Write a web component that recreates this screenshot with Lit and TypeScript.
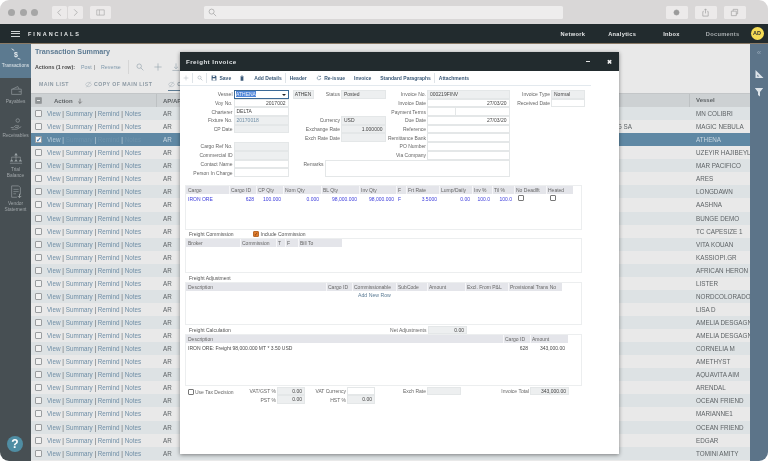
import { LitElement, css, html, svg } from "lit";
import { customElement } from "lit/decorators.js";

const VESSELS = [
  "MN COLIBRI", "MAGIC NEBULA", "ATHENA", "UZEYIR HAJIBEYLI", "MAR PACIFICO", "ARES", "LONGDAWN",
  "AASHNA", "BUNGE DEMO", "TC CAPESIZE 1", "VITA KOUAN", "KASSIOPI.GR", "AFRICAN HERON", "LISTER",
  "NORDCOLORADO", "LISA D", "AMELIA DESGAGNES", "AMELIA DESGAGNES", "CORNELIA M", "AMETHYST",
  "AQUAVITA AIM", "ARENDAL", "OCEAN FRIEND", "MARIANNE1", "OCEAN FRIEND", "EDGAR", "TOMINI AMITY",
];

type Cell = { t?: string; k: "l" | "f" | "g"; c: string; r: string; right?: boolean; cls?: string };

// grid lines: 1 label, 2 field, 3 gap, 4 athen, 5-6 remarks label, 7 field, 8 label, 9 field, 10 label, 11 field
const FORM: Cell[] = [
  { t: "Vessel", k: "l", c: "1/2", r: "1" },
  { t: "Voy No.", k: "l", c: "1/2", r: "2" },
  { t: "2017002", k: "f", c: "2/3", r: "2", right: true },
  { t: "Charterer", k: "l", c: "1/2", r: "3" },
  { t: "DELTA", k: "f", c: "2/3", r: "3" },
  { t: "Fixture No.", k: "l", c: "1/2", r: "4" },
  { t: "20170018", k: "g", c: "2/3", r: "4", cls: "blue" },
  { t: "CP Date", k: "l", c: "1/2", r: "5" },
  { k: "g", c: "2/3", r: "5" },
  { t: "Cargo Ref No.", k: "l", c: "1/2", r: "7" },
  { k: "g", c: "2/3", r: "7" },
  { t: "Commercial ID", k: "l", c: "1/2", r: "8" },
  { k: "g", c: "2/3", r: "8" },
  { t: "Contact Name", k: "l", c: "1/2", r: "9" },
  { k: "f", c: "2/3", r: "9" },
  { t: "Person In Charge", k: "l", c: "1/2", r: "10" },
  { k: "f", c: "2/3", r: "10" },
  { t: "ATHEN", k: "g", c: "4/5", r: "1", cls: "center" },
  { t: "Status", k: "l", c: "5/7", r: "1" },
  { t: "Posted", k: "g", c: "7/8", r: "1" },
  { t: "Currency", k: "l", c: "4/7", r: "4" },
  { t: "USD", k: "g", c: "7/8", r: "4" },
  { t: "Exchange Rate", k: "l", c: "4/7", r: "5" },
  { t: "1.000000", k: "g", c: "7/8", r: "5", right: true },
  { t: "Exch Rate Date", k: "l", c: "4/7", r: "6" },
  { k: "g", c: "7/8", r: "6" },
  { t: "Remarks", k: "l", c: "4/6", r: "9" },
  { k: "f", c: "6/10", r: "9/11" },
  { t: "Invoice No.", k: "l", c: "8/9", r: "1" },
  { t: "000219FINV", k: "g", c: "9/10", r: "1" },
  { t: "Invoice Date", k: "l", c: "8/9", r: "2" },
  { t: "27/03/20", k: "f", c: "9/10", r: "2", right: true },
  { t: "Payment Terms", k: "l", c: "8/9", r: "3" },
  { t: "Due Date", k: "l", c: "8/9", r: "4" },
  { t: "27/03/20", k: "f", c: "9/10", r: "4", right: true },
  { t: "Reference", k: "l", c: "8/9", r: "5" },
  { k: "f", c: "9/10", r: "5" },
  { t: "Remittance Bank", k: "l", c: "8/9", r: "6" },
  { k: "f", c: "9/10", r: "6" },
  { t: "PO Number", k: "l", c: "8/9", r: "7" },
  { k: "f", c: "9/10", r: "7" },
  { t: "Via Company", k: "l", c: "8/9", r: "8" },
  { k: "f", c: "9/10", r: "8" },
  { t: "Invoice Type", k: "l", c: "10/11", r: "1" },
  { t: "Normal", k: "g", c: "11/12", r: "1" },
  { t: "Received Date", k: "l", c: "10/11", r: "2" },
  { k: "f", c: "11/12", r: "2" },
];

const FOOTER: Cell[] = [
  { t: "VAT/GST %", k: "l", c: "2/3", r: "1" },
  { t: "0.00", k: "g", c: "3/4", r: "1", right: true },
  { t: "PST %", k: "l", c: "2/3", r: "2" },
  { t: "0.00", k: "g", c: "3/4", r: "2", right: true },
  { t: "VAT Currency", k: "l", c: "4/5", r: "1" },
  { k: "f", c: "5/6", r: "1" },
  { t: "HST %", k: "l", c: "4/5", r: "2" },
  { t: "0.00", k: "g", c: "5/6", r: "2", right: true },
  { t: "Exch Rate", k: "l", c: "6/7", r: "1" },
  { k: "g", c: "7/8", r: "1" },
  { t: "Invoice Total", k: "l", c: "8/9", r: "1" },
  { t: "343,000.00", k: "g", c: "9/10", r: "1", right: true },
];

// [title, width]
const CARGO_COLS: [string, number][] = [
  ["Cargo", 43], ["Cargo ID", 27], ["CP Qty", 27], ["Nom Qty", 38], ["BL Qty", 38], ["Inv Qty", 37], ["F", 10],
  ["Frt Rate", 33], ["Lump/Daily", 33], ["Inv %", 20], ["Til %", 22], ["No Deadlft", 32], ["Heated", 26],
];
const BROKER_COLS: [string, number][] = [["Broker", 54], ["Commission", 36], ["T", 9], ["F", 13], ["Bill To", 43]];
const ADJUST_COLS: [string, number][] = [
  ["Description", 140], ["Cargo ID", 26], ["Commissionable", 44], ["SubCode", 31], ["Amount", 38],
  ["Excl. From P&L", 43], ["Provisional Trans No", 53],
];
const CALC_COLS: [string, number][] = [["Description", 317], ["Cargo ID", 27], ["Amount", 37]];

const cellsFor = (cells: Cell[]) =>
  cells.map((c) => {
    const area = `grid-column:${c.c};grid-row:${c.r}`;
    if (c.k === "l") return html`<span class="lbl" style=${area}>${c.t}</span>`;
    return html`<span class="fld ${c.k === "g" ? "grey" : ""} ${c.right ? "right" : ""} ${c.cls ?? ""}" style=${area}>${c.t ?? ""}</span>`;
  });

const head = (cols: [string, number][]) => html`
  <div class="thead">
    ${cols.map(([t, w]) => html`<span class="th" style="width:${w}px">${t}</span>`)}
  </div>
`;

const ICON = {
  plus: svg`<path d="M5 1v8M1 5h8" fill="none" stroke="#a9b2ba" stroke-width=".8"/>`,
  search: svg`<circle cx="4.2" cy="4.2" r="2.6" fill="none" stroke="#8d99a4" stroke-width=".8"/><path d="M6.2 6.2 9 9" stroke="#8d99a4" stroke-width=".9"/>`,
  save: svg`<path d="M1 1h6.5L9 2.5V9H1z" fill="#3c5a78"/><path d="M3 1h3.4v2.4H3zM2.6 5.6h4.8V9H2.6z" fill="#fff"/>`,
  trash: svg`<path d="M2.2 2h5.6v.9H2.2zM4 1h2v1H4zM2.7 3.2h4.6V9.4H2.7z" fill="#3c5a78"/>`,
  reissue: svg`<path d="M8 5a3 3 0 1 1-1-2.3" fill="none" stroke="#3c5a78" stroke-width=".8"/><path d="M7.8 1v2.2H5.6z" fill="#3c5a78"/>`,
};

@customElement("freight-invoice")
export class FreightInvoice extends LitElement {
  render() {
    return html`
      <div class="title">
        <span>Freight Invoice</span>
        <span class="winbtns"><i class="min"></i><i class="close">✖</i></span>
      </div>
      <div class="toolbar">
        <svg viewBox="0 0 10 10" class="ico">${ICON.plus}</svg><i class="sep"></i>
        <svg viewBox="0 0 10 10" class="ico">${ICON.search}</svg><i class="sep"></i>
        <span class="tool tight"><svg viewBox="0 0 10 10" class="ico">${ICON.save}</svg>Save</span>
        <svg viewBox="0 0 10 10" class="ico trash">${ICON.trash}</svg>
        <span class="tool">Add Details</span><i class="sep"></i>
        <span class="tool">Header</span>
        <span class="tool tight"><svg viewBox="0 0 10 10" class="ico">${ICON.reissue}</svg>Re-issue</span>
        <span class="tool">Invoice</span>
        <span class="tool">Standard Paragraphs</span><i class="sep"></i>
        <span class="tool">Attachments</span>
      </div>

      <div class="form">
        <span class="fld select"><em>ATHENA</em><b></b></span>
        <span class="fld split"><i></i><i></i></span>
        ${cellsFor(FORM)}
      </div>

      <div class="box cargo">
        ${head(CARGO_COLS)}
        <div class="trow blue">
          <span style="width:43px">IRON ORE</span>
          <span class="r" style="width:27px">628</span>
          <span class="r" style="width:27px">100.000</span>
          <span class="r" style="width:38px">0.000</span>
          <span class="r" style="width:38px">98,000.000</span>
          <span class="r" style="width:37px">98,000.000</span>
          <span style="width:10px">F</span>
          <span class="r" style="width:33px">3.5000</span>
          <span class="r" style="width:33px">0.00</span>
          <span class="r" style="width:20px">100.0</span>
          <span class="r" style="width:22px">100.0</span>
          <span style="width:32px"><i class="cb"></i></span>
          <span style="width:26px"><i class="cb"></i></span>
        </div>
      </div>

      <div class="seclabel">
        <span class="w-fc">Freight Commission</span>
        <i class="cb orange">✓</i><span>Include Commission</span>
      </div>
      <div class="box broker">${head(BROKER_COLS)}</div>

      <div class="seclabel"><span>Freight Adjustment</span></div>
      <div class="box adjust">
        ${head(ADJUST_COLS)}
        <div class="addrow">Add New Row</div>
      </div>

      <div class="seclabel calc">
        <span>Freight Calculation</span>
        <span class="net"><span class="lbl">Net Adjustments</span><span class="fld grey right netval">0.00</span></span>
      </div>
      <div class="box calcbox">
        ${head(CALC_COLS)}
        <div class="trow dark">
          <span style="width:317px">IRON ORE: Freight 98,000.000 MT * 3.50 USD</span>
          <span class="r" style="width:27px">628</span>
          <span class="r" style="width:37px">343,000.00</span>
        </div>
      </div>

      <div class="footer">
        <span class="usetax"><i class="cb"></i>Use Tax Decision</span>
        ${cellsFor(FOOTER)}
      </div>
    `;
  }

  static styles = css`
    :host {
      display: block;
      background: #fff;
      color: #555;
      font: 5px "Liberation Sans", Arial, sans-serif;
      height: 402px;
      box-shadow: 0 1px 4px rgba(0, 0, 0, 0.45);
    }
    .title {
      height: 19px;
      background: #222b2e;
      color: #dfe3e5;
      display: flex;
      align-items: center;
      justify-content: space-between;
      padding: 0 7px 0 6px;
      font-size: 6.2px;
      font-weight: bold;
      letter-spacing: 0.45px;
    }
    .winbtns {
      display: flex;
      align-items: center;
      gap: 17px;
    }
    .min {
      width: 4px;
      height: 1px;
      background: #e4e4e4;
    }
    .close {
      font-style: normal;
      font-size: 6px;
      color: #f2f2f2;
    }
    .toolbar {
      height: 15px;
      margin-right: 28px;
      border-bottom: 1px solid #e3e9ee;
      box-sizing: border-box;
      padding-left: 3px;
      display: flex;
      align-items: center;
      gap: 9px;
      color: #3c5a78;
      font-size: 5px;
      font-weight: bold;
    }
    .ico {
      width: 6px;
      height: 6px;
      flex: none;
    }
    .ico.trash {
      margin-left: -1px;
    }
    .tool {
      display: flex;
      align-items: center;
      white-space: nowrap;
    }
    .tool.tight .ico {
      margin-right: 2.5px;
    }
    .sep {
      width: 1px;
      height: 10px;
      background: #dfe4e8;
      margin: 0 -5px 0 -6px;
      flex: none;
    }
    .form {
      margin-top: 4px;
      padding-left: 6px;
      display: grid;
      grid-template-columns: 47.5px 55px 4px 21px 11px 16.5px 44.5px 41.5px 82.5px 41.5px 33.5px;
      grid-template-rows: repeat(10, 8.7px);
    }
    .lbl {
      justify-self: end;
      align-self: center;
      white-space: nowrap;
      padding-right: 1px;
      color: #666;
      line-height: 8px;
    }
    .fld {
      box-sizing: border-box;
      border: 0.5px solid #e4e7e8;
      padding: 0 2px;
      line-height: 7.7px;
      color: #444;
      white-space: nowrap;
      overflow: hidden;
      background: #fff;
      min-width: 0;
    }
    .fld.grey {
      background: #edeff0;
    }
    .fld.right {
      text-align: right;
    }
    .fld.center {
      text-align: center;
      padding: 0;
    }
    .fld.blue {
      color: #6f8ea6;
    }
    .select {
      grid-column: 2/3;
      grid-row: 1;
      border: 1px solid #3c6a96;
      position: relative;
      padding: 0 1px;
      line-height: 6.7px;
    }
    .select em {
      font-style: normal;
      background: #4f86d9;
      color: #e8eefa;
      padding: 0 0.5px;
    }
    .select b {
      position: absolute;
      right: 2px;
      top: 2.5px;
      border: 2px solid transparent;
      border-top: 2.5px solid #222;
      border-bottom: 0;
    }
    .split {
      grid-column: 9/10;
      grid-row: 3;
      display: flex;
      padding: 0;
    }
    .split i {
      width: 26.5px;
      border-right: 0.5px solid #e4e7e8;
    }
    .split i:last-child {
      flex: 1;
      border: 0;
    }
    .box {
      box-sizing: border-box;
      margin-left: 5px;
      width: 397px;
      border: 1px solid #eceeef;
    }
    .cargo {
      margin-top: 8px;
      height: 45px;
    }
    .broker {
      height: 35px;
    }
    .adjust {
      height: 43.5px;
    }
    .calcbox {
      height: 52.5px;
    }
    .thead {
      display: flex;
      height: 8px;
      background: #e4e5ea;
      width: max-content;
      padding-left: 1px;
    }
    .th {
      box-sizing: border-box;
      padding-left: 1px;
      line-height: 8px;
      color: #666;
      white-space: nowrap;
      overflow: hidden;
      border-right: 0.5px solid #f6f6f8;
    }
    .th:last-child {
      border: 0;
    }
    .trow {
      display: flex;
      padding: 1px 0 0 1px;
      height: 8px;
      line-height: 8px;
      white-space: nowrap;
    }
    .trow span {
      box-sizing: border-box;
      padding-left: 1px;
    }
    .trow .r {
      text-align: right;
      padding-right: 3px;
    }
    .trow.blue {
      color: #3c3cdc;
    }
    .trow.dark {
      color: #4a4a4a;
    }
    .cb {
      display: inline-block;
      box-sizing: border-box;
      width: 6px;
      height: 6px;
      border: 0.5px solid #777;
      border-radius: 1px;
      background: #fff;
      margin-left: 2px;
      vertical-align: top;
      font-style: normal;
    }
    .cb.orange {
      margin: 0 1.5px 0 0;
      background: #e07b2c;
      border-color: #b96a2c;
      color: #6b3510;
      font-size: 5px;
      line-height: 5px;
      text-align: center;
    }
    .seclabel {
      height: 8.5px;
      padding-left: 9px;
      display: flex;
      align-items: center;
      color: #555;
      white-space: nowrap;
    }
    .w-fc {
      width: 64px;
    }
    .calc {
      justify-content: space-between;
      padding-right: 152px;
    }
    .net {
      display: flex;
      align-items: center;
      height: 8.5px;
    }
    .netval {
      width: 39px;
      height: 8px;
      margin-left: 0.5px;
    }
    .addrow {
      margin: 1px 0 0 172px;
      color: #5d7d96;
      font-size: 5.2px;
    }
    .footer {
      margin-top: 0.5px;
      padding-left: 6px;
      display: grid;
      grid-template-columns: 59px 32px 28px 42px 28px 52px 34px 69px 39px;
      grid-template-rows: 8.5px 8.5px;
    }
    .usetax {
      grid-column: 1;
      grid-row: 1;
      display: flex;
      align-items: center;
      margin-left: 2px;
      line-height: 8px;
      padding-top: 1px;
      color: #666;
    }
    .usetax .cb {
      margin: 0 1px 0 0;
    }
  `;
}

const SIDE = [
  {
    t: ["Payables"],
    icon: svg`<path d="M3 7h11v6H3zM4 7l6-3 1.5 3M11 10h3" fill="none" stroke="#8b9396" stroke-width=".9"/>`,
  },
  {
    t: ["Receivables"],
    icon: svg`<circle cx="10" cy="4" r="2" fill="none" stroke="#8b9396" stroke-width=".9"/><path d="M2 12h3l2-2h4l-1 2H7M3 14h6l5-3" fill="none" stroke="#8b9396" stroke-width=".9"/>`,
  },
  {
    t: ["Trial", "Balance"],
    icon: svg`<path d="M8 2l2 3H6zM3 9l2 3H1zM13 9l2 3h-4zM8 9l2 3H6z" fill="#9aa2a5"/><path d="M8 5v2M3 9V7h10v2M8 7v2M1 14h14" fill="none" stroke="#9aa2a5" stroke-width=".7"/>`,
  },
  {
    t: ["Vendor", "Statement"],
    icon: svg`<path d="M3 1h8l2 2v8M3 1v13h6" fill="none" stroke="#8b9396" stroke-width=".9"/><path d="M5 5h6M5 7.500h6M5 10h3" stroke="#8b9396" stroke-width=".8"/><path d="M12 10v4M10 12.500l2 2 2-2" fill="none" stroke="#aab0b3" stroke-width=".9"/>`,
  },
];

@customElement("app-root")
export class AppRoot extends LitElement {
  private row(vessel: string, i: number) {
    const selected = i === 2;
    const cls = selected ? "sel" : i % 2 === 0 ? "even" : "odd";
    return html`
      <div class="row ${cls}">
        <span class="c-check"><i class="box ${selected ? "checked" : ""}">${selected ? "✓" : ""}</i></span>
        <span class="c-action">
          <a class="first">View</a> | <a>Summary</a> | <a>Remind</a> | <a>Notes</a>
        </span>
        <span class="c-ar">AR</span>
        <span class="c-owner">${i === 1 ? "GLOBAL SHIPPING SA" : ""}</span>
        <span class="c-vessel">${vessel}</span>
      </div>
    `;
  }

  render() {
    return html`
      <div class="frame">
        <header class="chrome">
          <span class="dots"><i></i><i></i><i></i></span>
          <span class="navbtns">
            <button><svg viewBox="0 0 10 10"><path d="M6.500 1.500 3 5l3.500 3.500" /></svg></button>
            <button><svg viewBox="0 0 10 10"><path d="M3.500 1.500 7 5 3.500 8.500" /></svg></button>
          </span>
          <button class="sidebtn"><svg viewBox="0 0 12 10"><path d="M1 1.500h10v7H1zM4.500 1.500v7" /></svg></button>
          <span class="address">
            <svg viewBox="0 0 10 10"><circle cx="4" cy="4" r="2.800" /><path d="M6 6l3 3" /></svg>
          </span>
          <span class="tools">
            <button><svg viewBox="0 0 10 10"><circle cx="5" cy="5" r="2.800" class="solid" /></svg></button>
            <button><svg viewBox="0 0 10 10"><path d="M3 4H2v5h6V4H7M5 6V1M3.500 2.500 5 1l1.500 1.500" /></svg></button>
            <button><svg viewBox="0 0 10 10"><path d="M1.500 3.500h5.500v5H1.500zM3.500 3.500v-2h5v5H7" /></svg></button>
          </span>
        </header>

        <nav class="topnav">
          <span class="burger"><i></i><i></i><i></i></span>
          <span class="brand">FINANCIALS</span>
          <span class="links">
            <a class="l1">Network</a><a class="l2">Analytics</a><a class="l3">Inbox</a><a class="l4 dim">Documents</a>
          </span>
          <span class="avatar">AD</span>
        </nav>

        <div class="main">
          <aside class="side">
            <div class="item active">
              <svg viewBox="0 0 16 16" class="sico">
                <text x="8" y="11" text-anchor="middle" font-size="8" font-weight="bold" fill="#e8edf0" font-family="Liberation Sans">$</text>
                <path d="M3 2l3 2M10 13l3 1" stroke="#e8edf0" stroke-width="1" />
              </svg>
              <span>Transactions</span>
            </div>
            ${SIDE.map(
              (s) => html`
                <div class="item">
                  <svg viewBox="0 0 16 16" class="sico">${s.icon}</svg>
                  ${s.t.map((l) => html`<span>${l}</span>`)}
                </div>
              `
            )}
            <span class="help">?</span>
          </aside>

          <section class="content">
            <div class="head">
              <h1>Transaction Summary</h1>
              <div class="actions">
                <b>Actions (1 row):</b>
                <a class="post">Post</a><span class="pipe">|</span><a>Reverse</a>
                <i class="vline"></i>
                <svg viewBox="0 0 10 10" class="aico"><circle cx="4" cy="4" r="2.800" /><path d="M6 6l3.200 3.200" /></svg>
                <svg viewBox="0 0 10 10" class="aico"><path d="M5 .5v9M.5 5h9" /></svg>
                <svg viewBox="0 0 10 10" class="aico"><path d="M5 .5v6.500M2.500 4.800 5 7.200l2.500-2.400M.5 9.300h9" /></svg>
              </div>
              <div class="tabs">
                <span class="tab">MAIN LIST</span>
                <span class="tab"><svg viewBox="0 0 10 10" class="eye"><path d="M.5 5s2-3 4.500-3 4.500 3 4.500 3-2 3-4.500 3S.5 5 .5 5zM2 9l6-8" /></svg>COPY OF MAIN LIST</span>
                <span class="tab current"><svg viewBox="0 0 10 10" class="eye"><path d="M.5 5s2-3 4.500-3 4.500 3 4.500 3-2 3-4.500 3S.5 5 .5 5zM2 9l6-8" /></svg>COPY</span>
              </div>
            </div>
            <div class="row thead">
              <span class="c-check"><i class="box minus"></i></span>
              <span class="c-action hd">Action<svg viewBox="0 0 10 10"><path d="M5 1v8M2 6l3 3 3-3" /></svg></span>
              <span class="c-ar">AP/AR</span>
              <span class="c-owner"></span>
              <span class="c-vessel">Vessel</span>
            </div>
            ${VESSELS.map((v, i) => this.row(v, i))}
          </section>

          <aside class="rightbar">
            <span class="chev">«</span>
            <svg viewBox="0 0 10 10"><path d="M1.500 1v8h8zM3.300 5.500v2h2z" fill-rule="evenodd" /></svg>
            <svg viewBox="0 0 10 10"><path d="M.8 1h8.400L6 5v4.500L4 8V5z" /></svg>
          </aside>

          <freight-invoice class="modal"></freight-invoice>
        </div>
      </div>
    `;
  }

  static styles = css`
    :host {
      display: block;
      width: 768px;
      height: 461px;
      overflow: hidden;
      background: #fff;
      font-family: "Liberation Sans", Arial, sans-serif;
      filter: blur(0.4px);
    }
    .frame {
      height: 461px;
      border-radius: 9px;
      overflow: hidden;
      display: flex;
      flex-direction: column;
    }
    .chrome {
      height: 24px;
      flex: none;
      background: #d9d7d7;
      display: flex;
      align-items: center;
      position: relative;
      padding-left: 8px;
      box-sizing: border-box;
    }
    .chrome button {
      border: 0;
      padding: 0;
      height: 13px;
      background: #eceaea;
      border-radius: 1.5px;
      display: flex;
      align-items: center;
      justify-content: center;
    }
    .chrome svg {
      width: 9px;
      height: 9px;
      fill: none;
      stroke: #a3a3a3;
      stroke-width: 0.8;
    }
    .chrome .solid {
      fill: #9b9b9b;
      stroke: #9b9b9b;
    }
    .dots {
      display: flex;
      gap: 4.500px;
      width: 44px;
    }
    .dots i {
      width: 7px;
      height: 7px;
      border-radius: 50%;
      background: #a6a6a6;
    }
    .navbtns {
      display: flex;
      gap: 1px;
    }
    .navbtns button {
      width: 15px;
    }
    .sidebtn {
      width: 21px;
      margin-left: 7px;
    }
    .address {
      margin-left: 93px;
      width: 359px;
      height: 13px;
      background: #eeeded;
      border-radius: 1.500px;
      display: flex;
      align-items: center;
      padding-left: 4px;
      box-sizing: border-box;
    }
    .tools {
      display: flex;
      gap: 7.500px;
      margin-left: 103px;
    }
    .tools button {
      width: 21.500px;
    }
    .topnav {
      height: 20px;
      flex: none;
      box-sizing: border-box;
      background: #222b2e;
      border-bottom: 1px solid #8a7a66;
      display: flex;
      align-items: center;
      padding-left: 11px;
      color: #e4e6e7;
      font-weight: bold;
      font-size: 5.700px;
    }
    .burger {
      display: flex;
      flex-direction: column;
      gap: 1.500px;
      width: 9px;
    }
    .burger i {
      height: 1px;
      background: #cfd3d5;
    }
    .brand {
      margin-left: 8px;
      letter-spacing: 1.950px;
      font-size: 5.500px;
    }
    .links {
      margin-left: auto;
      display: flex;
      letter-spacing: 0.300px;
    }
    .links a {
      white-space: nowrap;
    }
    .l2 {
      margin-left: 23px;
    }
    .l3 {
      margin-left: 27px;
    }
    .l4 {
      margin-left: 26px;
    }
    .dim {
      color: #a9aeb0;
    }
    .avatar {
      width: 13px;
      height: 13px;
      margin: 0 4.500px 0 11px;
      border-radius: 50%;
      background: #f5dc55;
      color: #333;
      font-size: 5.500px;
      text-align: center;
      line-height: 13px;
      letter-spacing: 0;
    }
    .main {
      flex: 1;
      display: flex;
      position: relative;
      min-height: 0;
    }
    .side {
      width: 31px;
      flex: none;
      background: #474f53;
      color: #a0a6a9;
      font-size: 4.800px;
      position: relative;
    }
    .item {
      display: flex;
      flex-direction: column;
      align-items: center;
      height: 34px;
      padding-top: 5px;
      box-sizing: border-box;
      line-height: 5.500px;
    }
    .item span {
      white-space: nowrap;
    }
    .item.active {
      background: #5c7a90;
      color: #dfe6ea;
      padding-top: 3px;
    }
    .sico {
      width: 14px;
      height: 14px;
      margin-bottom: 2px;
      flex: none;
    }
    .help {
      position: absolute;
      left: 7px;
      bottom: 9px;
      width: 16px;
      height: 16px;
      border-radius: 50%;
      background: #4f8da3;
      color: #fff;
      font-size: 12px;
      font-weight: bold;
      text-align: center;
      line-height: 16px;
    }
    .content {
      flex: 1;
      min-width: 0;
      background: #e9e9e9;
      overflow: hidden;
    }
    .head {
      height: 49px;
      padding: 3px 0 0 4px;
      box-sizing: border-box;
    }
    h1 {
      margin: 0;
      font-size: 7.200px;
      line-height: 10px;
      color: #5d7b93;
    }
    .actions {
      margin-top: 3px;
      height: 14px;
      display: flex;
      align-items: center;
      font-size: 5.300px;
      color: #7f98ab;
    }
    .actions b {
      color: #4a4a4a;
      margin-right: 6px;
    }
    .pipe {
      margin: 0 6px 0 2px;
      color: #666;
    }
    .vline {
      width: 1px;
      height: 14px;
      background: #d6d6d6;
      margin: 0 7px;
    }
    .aico {
      width: 8px;
      height: 8px;
      fill: none;
      stroke: #8a9aa6;
      stroke-width: 0.700px;
      margin-right: 10px;
    }
    .tabs {
      margin-top: 4px;
      display: flex;
      padding-left: 4px;
      font-size: 5.200px;
      font-weight: bold;
      letter-spacing: 0.450px;
      color: #8d9aa4;
      gap: 16px;
    }
    .tab {
      display: flex;
      align-items: center;
      height: 12px;
      white-space: nowrap;
    }
    .tab.current {
      border-bottom: 1px solid #5d7b93;
    }
    .eye {
      width: 7px;
      height: 7px;
      fill: none;
      stroke: #a2adb5;
      stroke-width: 0.700px;
      margin-right: 2px;
    }
    .row {
      display: flex;
      align-items: center;
      height: 13.070px;
      font-size: 6.300px;
      color: #5e6366;
      white-space: nowrap;
    }
    .row.thead {
      height: 14px;
      background: #cdd1d3;
      border-top: 1px solid #c3c6c8;
      box-sizing: border-box;
      font-size: 6px;
      font-weight: bold;
    }
    .row.even {
      background: #dde2e4;
    }
    .row.odd {
      background: #e9e9e9;
    }
    .row.sel {
      background: #5f88a4;
      color: #c9d6df;
    }
    .row a {
      color: #6f8ea6;
    }
    .row.sel a {
      color: #6d92ab;
    }
    .row.sel a.first {
      color: #b3c8d6;
    }
    .c-check {
      width: 16px;
      flex: none;
      padding-left: 4px;
      box-sizing: border-box;
    }
    .box {
      display: block;
      box-sizing: border-box;
      width: 7px;
      height: 7px;
      border: 0.700px solid #9a9d9f;
      border-radius: 1px;
      background: #f2f2f2;
      font-style: normal;
    }
    .box.checked {
      background: #f4f7f9;
      color: #3c78b4;
      font-size: 7px;
      line-height: 6px;
      text-align: center;
      font-weight: bold;
    }
    .box.minus {
      background: #8f9496;
      position: relative;
    }
    .box.minus::after {
      content: "";
      position: absolute;
      left: 1px;
      right: 1px;
      top: 2.300px;
      height: 1px;
      background: #e8e8e8;
    }
    .c-action {
      width: 110px;
      flex: none;
    }
    .c-action.hd {
      font-size: 6px;
      padding-left: 7px;
      box-sizing: border-box;
      display: flex;
      align-items: center;
      gap: 4px;
      border-right: 1px solid #bdc1c3;
      height: 100%;
    }
    .c-action.hd svg {
      width: 6px;
      height: 6px;
      fill: none;
      stroke: #555;
      stroke-width: 1;
    }
    .c-ar {
      width: 26px;
      flex: none;
      padding-left: 6px;
    }
    .c-owner {
      flex: none;
      width: 500px;
      text-align: right;
      padding-right: 57px;
      box-sizing: border-box;
    }
    .c-vessel {
      flex: 1;
      min-width: 0;
      overflow: hidden;
      padding-left: 6px;
      border-left: 1px solid transparent;
    }
    .thead .c-vessel {
      border-left-color: #bdc1c3;
      height: 100%;
      line-height: 13px;
    }
    .rightbar {
      width: 18px;
      flex: none;
      background: #5c7489;
      display: flex;
      flex-direction: column;
      align-items: center;
      color: #93a6b6;
      padding-top: 5px;
      box-sizing: border-box;
      gap: 8px;
    }
    .rightbar .chev {
      font-size: 8px;
      line-height: 8px;
      margin-bottom: 4px;
    }
    .rightbar svg {
      width: 10px;
      height: 10px;
      fill: #dde4ea;
    }
    .modal {
      position: absolute;
      left: 180px;
      top: 8px;
      width: 439px;
    }
  `;
}

declare global {
  interface HTMLElementTagNameMap {
    "app-root": AppRoot;
    "freight-invoice": FreightInvoice;
  }
}
